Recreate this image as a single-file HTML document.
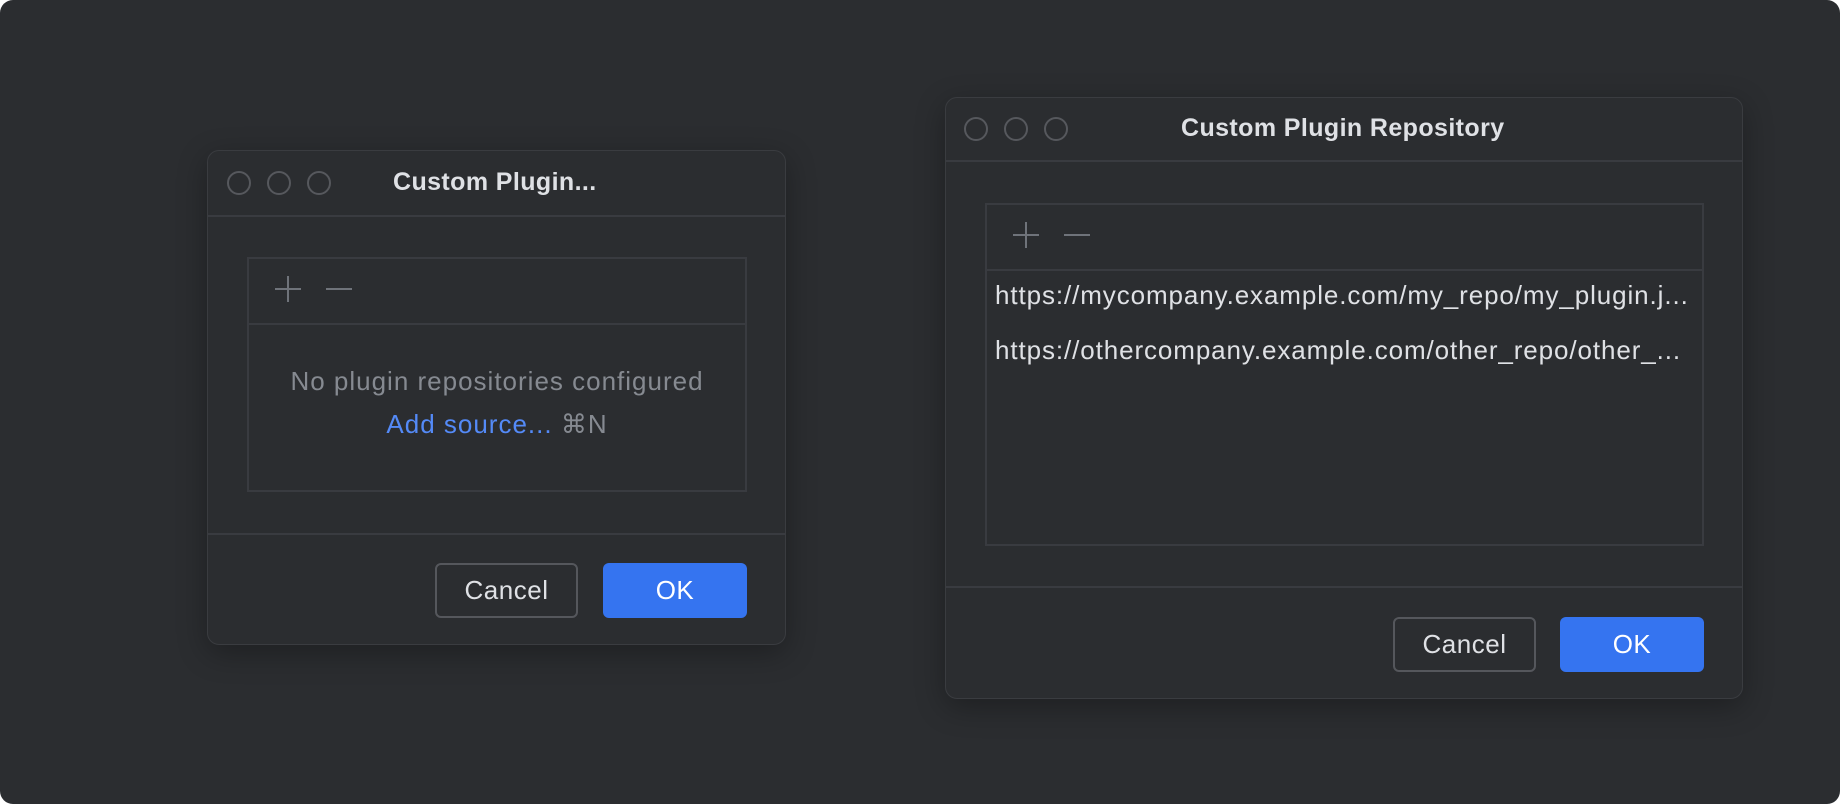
<!DOCTYPE html>
<html><head><meta charset="utf-8"><style>
*{box-sizing:border-box;margin:0;padding:0}
html,body{width:1840px;height:804px;background:#fff;overflow:hidden}
body{font-family:"Liberation Sans",sans-serif}
.page{position:absolute;left:0;top:0;width:1840px;height:804px;background:#2b2d30;border-radius:13px;overflow:hidden}
.dlg{position:absolute;background:#2b2d30;border:1px solid #3a3c40;border-radius:12px;box-shadow:0 8px 30px rgba(0,0,0,.3)}
.circ{position:absolute;width:24px;height:24px;border:2px solid #56585d;border-radius:50%}
.title{position:absolute;color:#dfe1e5;font-size:25px;font-weight:bold;letter-spacing:0.4px;white-space:nowrap}
.sep{position:absolute;left:0;right:0;height:2px;background:#393b40}
.box{position:absolute;border:2px solid #393b40}
.btn{position:absolute;border-radius:6px;font-size:26px;letter-spacing:0.5px;display:flex;align-items:center;justify-content:center;color:#dfe1e5}
.cancel{border:2px solid #55575c}
.ok{background:#3574f0;color:#fff}
.url{position:absolute;color:#dfe1e5;font-size:26px;letter-spacing:0.9px;white-space:nowrap}
.t2{font-size:26px;letter-spacing:1px}
</style></head><body><div class="page">

<div class="dlg" style="left:207px;top:150px;width:579px;height:495px">
  <div class="circ" style="left:19px;top:20px"></div>
  <div class="circ" style="left:59px;top:20px"></div>
  <div class="circ" style="left:99px;top:20px"></div>
  <div class="title" style="left:185px;top:17px">Custom Plugin...</div>
  <div class="sep" style="top:64px"></div>
  <div class="box" style="left:39px;top:106px;width:500px;height:235px">
    <svg style="position:absolute;left:25px;top:15px" width="90" height="30"><path d="M14 2V28M1 15H27" stroke="#6f737a" stroke-width="2"/><path d="M52 15H78" stroke="#6f737a" stroke-width="2"/></svg>
    <div style="position:absolute;left:0;right:0;top:64px;height:2px;background:#393b40"></div>
    <div class="t2" style="position:absolute;left:0;right:0;top:107px;text-align:center;color:#868a91">No plugin repositories configured</div>
    <div class="t2" style="position:absolute;left:0;right:0;top:150px;text-align:center"><span style="color:#548af7">Add source...</span> <span style="color:#868a91">⌘N</span></div>
  </div>
  <div class="sep" style="top:382px"></div>
  <div class="btn cancel" style="left:227px;top:412px;width:143px;height:55px">Cancel</div>
  <div class="btn ok" style="left:395px;top:412px;width:144px;height:55px">OK</div>
</div>

<div class="dlg" style="left:945px;top:97px;width:798px;height:602px">
  <div class="circ" style="left:18px;top:19px"></div>
  <div class="circ" style="left:58px;top:19px"></div>
  <div class="circ" style="left:98px;top:19px"></div>
  <div class="title" style="left:235px;top:16px">Custom Plugin Repository</div>
  <div class="sep" style="top:62px"></div>
  <div class="box" style="left:39px;top:105px;width:719px;height:343px">
    <svg style="position:absolute;left:25px;top:15px" width="90" height="30"><path d="M14 2V28M1 15H27" stroke="#6f737a" stroke-width="2"/><path d="M52 15H78" stroke="#6f737a" stroke-width="2"/></svg>
    <div style="position:absolute;left:0;right:0;top:64px;height:2px;background:#393b40"></div>
    <div class="url" style="left:8px;top:75px">https://mycompany.example.com/my_repo/my_plugin.j...</div>
    <div class="url" style="left:8px;top:130px">https://othercompany.example.com/other_repo/other_...</div>
  </div>
  <div class="sep" style="top:488px"></div>
  <div class="btn cancel" style="left:447px;top:519px;width:143px;height:55px">Cancel</div>
  <div class="btn ok" style="left:614px;top:519px;width:144px;height:55px">OK</div>
</div>

</div></body></html>
